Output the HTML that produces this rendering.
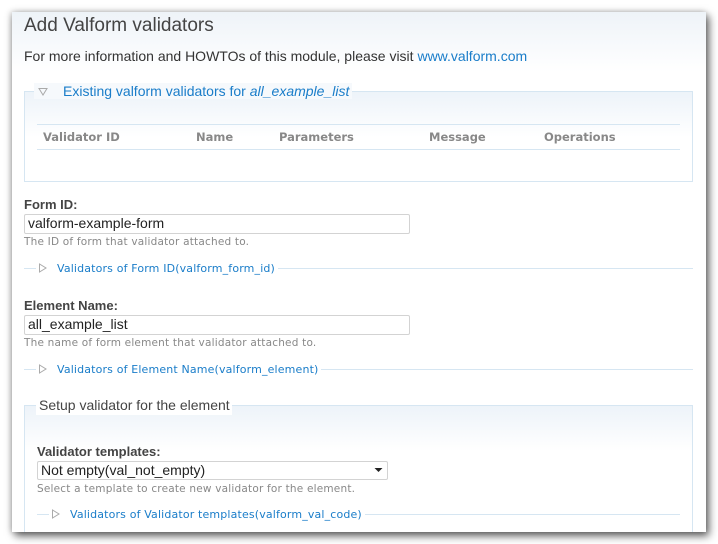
<!DOCTYPE html>
<html><head><meta charset="utf-8"><style>
*{margin:0;padding:0;box-sizing:border-box}
body{width:718px;height:544px;background:#fff;position:relative;overflow:hidden;font-family:"Liberation Sans",Arial,sans-serif}
.card{position:absolute;left:12px;top:12px;width:694px;height:520px;background:linear-gradient(#eef3f8 0,#fff 60px);box-shadow:3px 4px 8px rgba(0,0,0,.6),-1px 0 6px rgba(0,0,0,.25)}
.a{position:absolute;white-space:nowrap}
.v{font-family:"DejaVu Sans",Verdana,sans-serif}
.fs{position:absolute;border:1px solid #d6e6f2;background:linear-gradient(#edf3f9 0,#fff 45px)}
.inp{position:absolute;border:1px solid #d3d3d3;background:#fff;font-size:14px;color:#222;padding-left:3px;line-height:17px;border-radius:2px}
.lbl{font-weight:bold;font-size:13px;color:#444}
.desc{font-size:10.5px;color:#888;letter-spacing:.2px}
.lnk{font-size:11px;color:#1a7dc9;letter-spacing:.15px}
.line{position:absolute;height:1px;background:#d6e6f2}
.row{position:absolute;display:flex;align-items:center;height:14px}
.row .l{height:1px;background:#d6e6f2}
.row .f{flex:1;height:1px;background:#d6e6f2;margin-left:3px}
</style></head><body>
<div class="card"></div>
<div class="a" style="left:24px;top:15px;font-size:19px;color:#444">Add Valform validators</div>
<div class="a" style="left:24px;top:48px;font-size:14px;color:#333">For more information and HOWTOs of this module, please visit <span style="color:#1a7dc9">www.valform.com</span></div>

<div class="fs" style="left:24px;top:91px;width:669px;height:91px"></div>
<div class="a" style="left:34px;top:83px;height:16px;background:#f6f9fc;padding:0 3px 0 4px;font-size:14px;color:#1a7dc9"><svg style="vertical-align:0px;margin-right:15px" width="10" height="9"><path d="M1 1.5H9L5 8Z" fill="none" stroke="#aaa"/></svg>Existing valform validators for <i>all_example_list</i></div>
<div class="line" style="left:37px;top:124px;width:643px"></div>
<div class="line" style="left:37px;top:149px;width:643px"></div>
<div class="a v" style="top:130px;left:43px;font-size:11.5px;font-weight:bold;color:#888">Validator ID</div>
<div class="a v" style="top:130px;left:196px;font-size:11.5px;font-weight:bold;color:#888">Name</div>
<div class="a v" style="top:130px;left:279px;font-size:11.5px;font-weight:bold;color:#888">Parameters</div>
<div class="a v" style="top:130px;left:429px;font-size:11.5px;font-weight:bold;color:#888">Message</div>
<div class="a v" style="top:130px;left:544px;font-size:11.5px;font-weight:bold;color:#888">Operations</div>

<div class="a lbl" style="left:24px;top:197px">Form ID:</div>
<div class="inp" style="left:24px;top:214px;width:386px;height:20px">valform-example-form</div>
<div class="a v desc" style="left:24px;top:236px">The ID of form that validator attached to.</div>
<div class="row" style="left:24px;top:261px;width:669px"><div class="l" style="width:12px"></div><svg style="margin:0 10px 0 2px" width="9" height="10"><path d="M1.5 1V9L8 5Z" fill="none" stroke="#aaa"/></svg><span class="v lnk">Validators of Form ID(valform_form_id)</span><div class="f"></div></div>

<div class="a lbl" style="left:24px;top:298px">Element Name:</div>
<div class="inp" style="left:24px;top:315px;width:386px;height:20px">all_example_list</div>
<div class="a v desc" style="left:24px;top:337px">The name of form element that validator attached to.</div>
<div class="row" style="left:24px;top:362px;width:669px"><div class="l" style="width:12px"></div><svg style="margin:0 10px 0 2px" width="9" height="10"><path d="M1.5 1V9L8 5Z" fill="none" stroke="#aaa"/></svg><span class="v lnk">Validators of Element Name(valform_element)</span><div class="f"></div></div>

<div class="fs" style="left:24px;top:405px;width:669px;height:127px;border-bottom:none"></div>
<div class="a" style="left:36px;top:397px;height:18px;background:#fff;padding:0 2px 0 3px;font-size:14px;color:#444">Setup validator for the element</div>
<div class="a lbl" style="left:37px;top:444px">Validator templates:</div>
<div class="inp" style="left:37px;top:461px;width:351px;height:19px">Not empty(val_not_empty)</div>
<svg class="a" style="left:374px;top:467px" width="9" height="6"><path d="M0.5 1H8.5L4.5 5Z" fill="#222"/></svg>
<div class="a v desc" style="left:37px;top:483px">Select a template to create new validator for the element.</div>
<div class="row" style="left:37px;top:507px;width:643px"><div class="l" style="width:12px"></div><svg style="margin:0 10px 0 2px" width="9" height="10"><path d="M1.5 1V9L8 5Z" fill="none" stroke="#aaa"/></svg><span class="v lnk">Validators of Validator templates(valform_val_code)</span><div class="f"></div></div>
</body></html>
